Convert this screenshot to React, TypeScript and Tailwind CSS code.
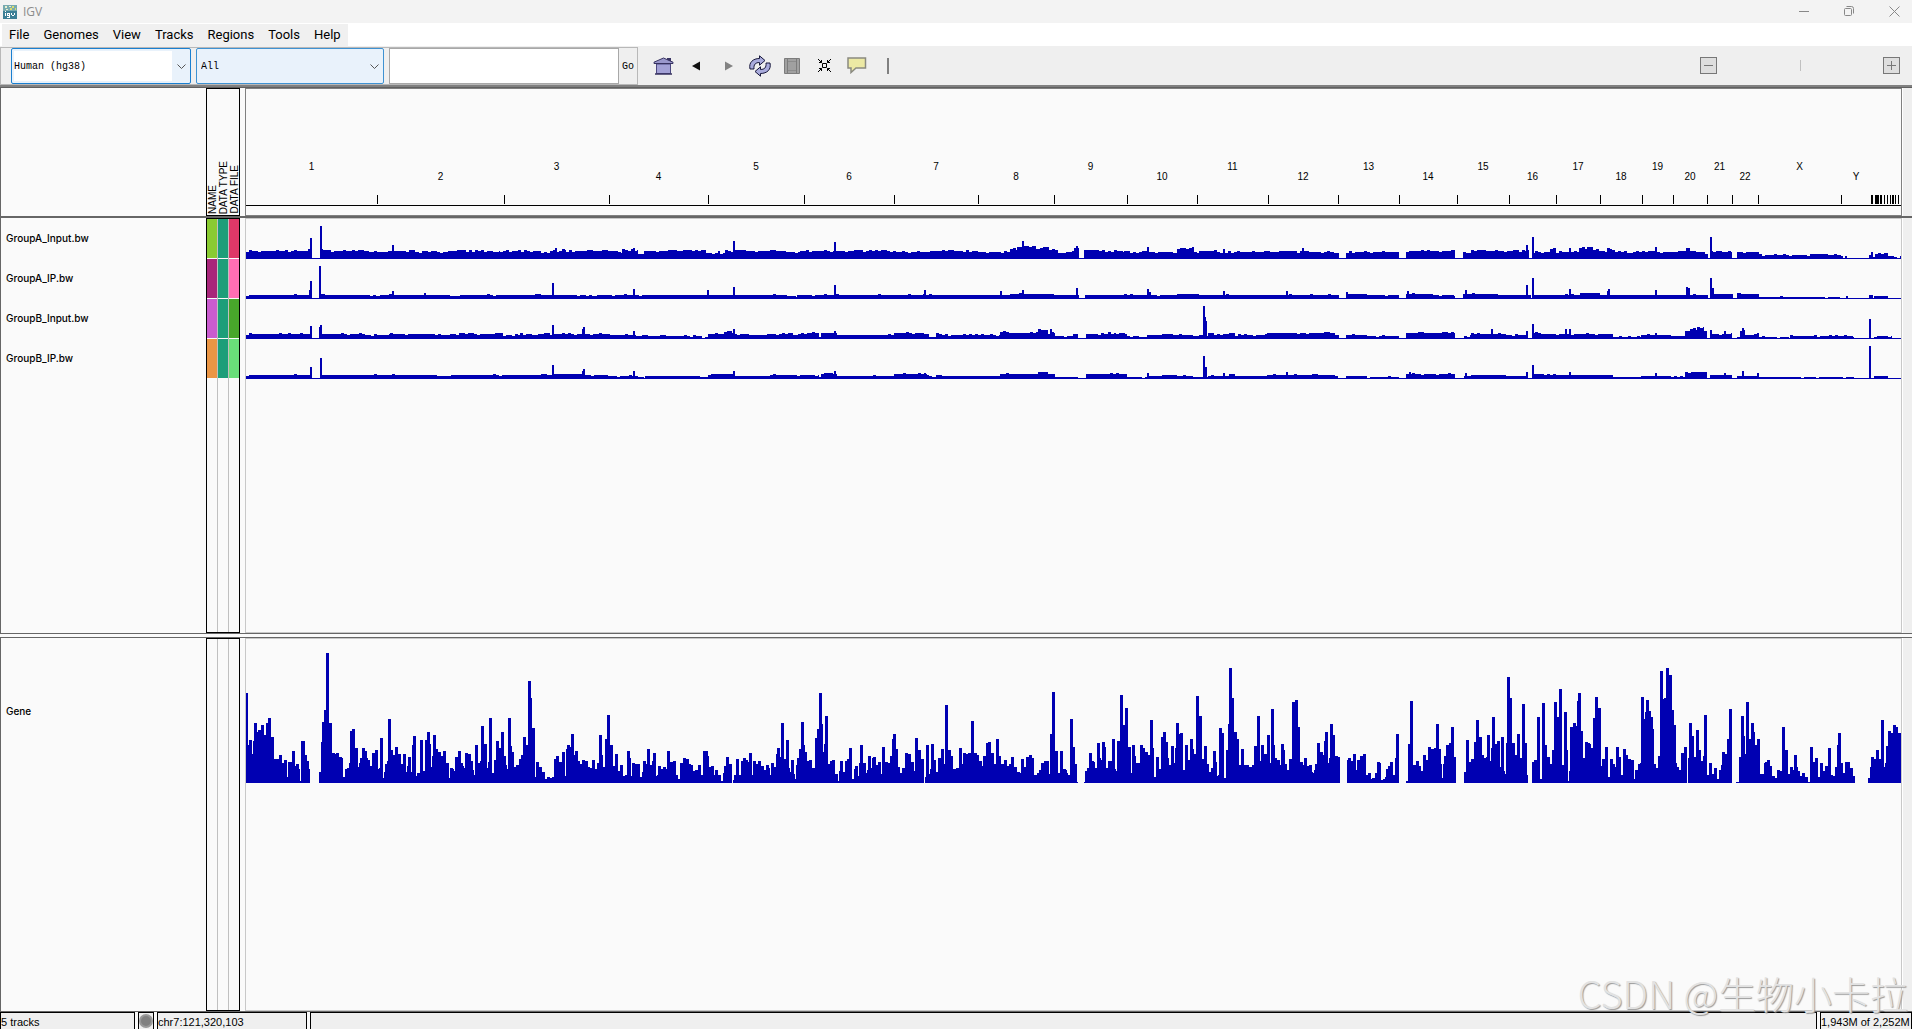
import React from "react";

const PLOT_LEFT = 246;
const PLOT_WIDTH = 1655;

type Run = { origin: number; scale: number; steps: string };

// Gene density: each run lists "x top" pairs, where top is measured from 0 down to 459.
const GENE_FLOOR = 459;
const GENE_RUNS: Run[] = [
  {
    origin: 235,
    scale: 2.8,
    steps:
      "31 189,36 345,39 330,48 372,51 333,53 279,62 306,65 300,73 285,81 315,87 279,92 264,101 321,109 387,123 375,132 399,137 390,146 441,148 396,160 363,168 408,171 402,179 417,182 453,185 333,196 375,202 393,207 417,210 459,235 426,241 336,244 276,249 240,255 69,263 279,272 369,280 372,283 369,291 381,300 384,302 441,308 417,314 414,319 399,322 303,328 297,336 354,344 411,347 399,350 384,356 354,364 363,370 384,372 390,378 408,384 369,392 360,400 417,403 414,406 324,414 444,417 426,420 402,426 393,428 267,437 360,442 375,448 351,456 372,465 402,470 372,479 426,482 408,484 381,493 426,496 345,498 318,507 438,510 429,518 330,526 423,532 330,538 306,546 342,549 411,552 378,554 315,563 357,568 366,577 378,582 363,591 399,599 444,602 414,610 417,613 423,616 381,624 363,633 399,638 408,641 414,644 369,652 372,661 393,666 420,669 435,672 345,680 399,686 393,689 288,697 342,706 414,708 396,711 264,720 429,725 390,731 333,739 354,745 306,753 378,759 405,762 417,764 264,773 348,776 366,781 411,787 405,795 387,801 375,806 321,815 345,820 153,829 204,832 294,840 441,843 396,851 411,860 426,868 447,874 441,882 444,888 441,893 387,899 378,907 396,916 366,924 438,927 357,930 345,938 351,941 312,949 375,952 363,960 393,966 402,972 390,980 393,988 411,994 414,1000 390,1008 417,1014 399,1019 315,1028 375,1030 411,1036 327,1042 255,1050 345,1058 408,1064 372,1072 423,1078 405,1086 438,1092 435,1098 363,1106 384,1109 438,1112 399,1120 402,1134 441,1140 426,1142 393,1151 402,1154 357,1162 405,1168 393,1170 369,1179 438,1182 435,1184 408,1193 417,1198 411,1207 417,1210 363,1218 396,1226 393,1235 435,1240 447,1246 399,1254 384,1262 387,1271 402,1276 405,1282 423,1288 420,1296 405,1305 435,1310 363,1324 378,1327 411,1333 408,1341 435,1344 420,1352 435,1361 453,1366 429,1369 408,1375 381,1383 402,1392 459,1394 450,1397 435,1403 387,1411 435,1417 393,1422 384,1431 390,1436 396,1439 369,1448 435,1450 393,1459 402,1464 393,1473 408,1481 420,1487 405,1495 414,1498 435,1501 399,1509 411,1515 372,1518 354,1526 381,1529 279,1537 387,1543 330,1551 414,1554 426,1557 390,1565 432",
  },
  {
    origin: 795,
    scale: 2.8,
    steps:
      "0 447,3 405,6 384,11 357,17 276,25 345,28 366,34 393,39 390,48 414,56 324,62 297,67 189,76 282,78 366,81 342,84 258,92 402,98 393,104 390,112 432,120 453,123 423,126 393,134 426,140 393,146 387,151 354,160 447,165 417,168 408,176 438,179 399,182 345,190 399,199 429,202 420,204 378,213 414,216 384,218 381,227 405,232 396,241 432,244 351,252 396,260 399,266 378,272 327,274 312,283 357,288 411,294 429,300 414,308 369,316 372,325 396,333 423,336 324,344 360,353 387,361 459,364 441,367 345,375 432,378 417,381 342,389 390,395 426,400 384,409 357,417 402,420 225,428 360,437 378,442 417,451 414,459 354,468 402,470 369,479 372,484 369,493 273,501 369,510 375,515 393,524 408,526 378,535 339,540 336,549 369,557 402,563 327,571 378,577 402,585 390,594 408,599 402,605 381,613 411,622 426,630 429,633 387,641 411,647 381,655 375,664 384,669 435,678 429,683 420,689 399,697 393,711 432,714 312,720 186,728 363,736 429,742 363,750 417,759 420,762 429,764 435,770 267,778 351,784 402,790 456,792 459,809 456,812 423,818 414,823 369,832 393,837 396,840 414,846 339,854 384,857 390,860 336,868 351,871 414,876 393,888 327,896 417,899 423,902 333,910 195,918 285,924 234,932 351,941 429,944 345,952 378,955 399,966 345,974 354,980 366,988 375,994 270,1002 354,1005 441,1011 381,1019 417,1025 321,1030 306,1039 336,1044 384,1047 405,1053 348,1061 399,1064 354,1067 279,1075 312,1078 309,1086 420,1092 345,1100 390,1106 327,1114 357,1117 372,1123 198,1131 258,1140 387,1145 348,1154 402,1159 426,1165 414,1170 363,1179 396,1182 438,1184 435,1187 294,1196 309,1201 444,1207 360,1212 282,1215 114,1224 204,1229 306,1238 327,1243 405,1249 357,1257 405,1271 411,1280 405,1285 348,1294 258,1302 393,1305 345,1313 372,1322 315,1330 399,1333 237,1341 345,1344 384,1350 390,1358 405,1361 342,1369 360,1372 402,1378 420,1383 387,1392 216,1400 210,1408 291,1414 396,1422 405,1425 384,1434 408,1439 405,1448 426,1450 429,1453 420,1456 402,1462 339,1470 366,1478 375,1481 333,1484 306,1492 399,1495 384,1498 282,1506 315,1512 378,1520 381,1526 459,1546 390,1548 384,1557 393",
  },
  {
    origin: 1352,
    scale: 2.8,
    steps:
      "0 393,3 372,11 420,14 390,22 378,31 372,39 435,45 429,53 447,56 444,64 429,70 396,78 399,81 450,87 447,92 441,95 417,101 408,106 396,115 435,120 384,123 312,132 459,151 453,157 342,162 213,171 405,179 393,188 408,193 423,199 375,207 390,213 351,221 357,230 354,235 282,244 357,249 402,252 444,255 402,258 378,263 345,272 339,277 291,286 381,291 459,314 426,319 330,328 396,333 387,342 336,347 270,356 321,364 375,370 384,375 381,378 315,386 393,389 354,392 261,400 342,406 333,414 411,417 321,426 423,428 432,431 339,434 141,442 204,448 339,456 375,462 312,470 384,476 222,484 339,490 435,493 459,504 396,510 390,518 261,526 447,532 219,540 345,546 381,554 402,560 360,566 216,574 261,580 177,588 405,594 246,602 360,605 453,608 423,610 291,619 279,627 288,630 213,633 189,641 303,647 384,652 336,661 339,666 342,669 354,675 264,680 201,689 234,697 408,700 387,708 351,717 441,722 387,731 402,736 411,739 351,748 381,753 435,759 357,767 375,773 387,781 390,790 447,792 420,801 402,806 399,809 201,818 267,820 246,823 210,832 243,837 261,843 297,846 402,851 414,857 378,862 123,871 207,874 204,879 114,888 135,896 240,902 285,907 399,910 411,916 420,921 369,930 351,938 459,941 384,944 279,952 318,958 381,963 300,972 360,977 393,983 378,986 255,994 435,1000 399,1008 432,1014 414,1022 447,1028 420,1033 405,1036 366,1044 372,1050 327,1056 237,1064 459,1075 456,1084 381,1089 258,1098 318,1100 372,1103 216,1112 327,1117 279,1126 306,1128 345,1134 327,1142 432,1154 399,1157 396,1162 390,1170 408,1176 438,1184 444,1190 420,1198 423,1204 291,1212 360,1221 432,1226 411,1235 420,1238 375,1246 411,1249 423,1254 438,1260 429,1268 441,1277 456,1282 351,1291 396,1296 384,1305 441,1310 399,1319 423,1324 408,1333 354,1341 435,1347 438,1352 411,1358 345,1361 309,1369 399,1375 429,1380 396,1394 414,1403 438,1408 459,1445 444,1450 411,1453 381,1462 387,1467 360,1475 387,1480 384,1481 270,1490 411,1492 399,1495 348,1501 303,1509 309,1515 285,1523 291,1529 309",
  },
];

function genePath(height: number): string {
  const pts: [number, number][] = [];
  GENE_RUNS.forEach((run) => {
    run.steps.split(",").forEach((pair) => {
      const [x, top] = pair.split(" ").map(Number);
      pts.push([
        Math.round(run.origin + x / run.scale) - PLOT_LEFT,
        height - (GENE_FLOOR - top) / 3,
      ]);
    });
  });
  let d = `M0 ${height}`;
  pts.forEach(([x, y]) => {
    d += `H${Math.max(0, x)}V${y}`;
  });
  return `${d}H${PLOT_WIDTH}V${height}Z`;
}

type Track = {
  name: string;
  colors: string[];
  // "x:height" plateaus and "x:height" peaks, in plot pixels
  levels: string;
  peaks: string;
  rough: number;
};

const TRACKS: Track[] = [
  {
    name: "GroupA_Input.bw",
    colors: ["bg-[#89cb32]", "bg-[#1d9e79]", "bg-[#de3868]"],
    rough: 0.5,
    levels:
      "246:8,308:10,312:1,320:9,325:8,369:6,374:7,382:8,416:7,440:7,448:8,500:7,506:8,541:6,550:8,562:9,566:8,618:7,622:9,634:8,638:5,644:8,706:6,718:7,720:5,725:8,770:8,786:7,795:6,800:8,890:7,930:8,980:7,1010:10,1017:12,1036:9,1040:12,1049:9,1058:6,1066:7,1074:11,1079:1,1084:8,1124:7,1155:7,1177:11,1194:6,1199:8,1217:6,1228:7,1334:6,1339:1,1346:7,1399:1,1406:8,1455:1,1463:6,1471:8,1529:1,1532:7,1550:10,1556:7,1579:11,1587:12,1593:10,1599:8,1607:10,1612:8,1615:7,1657:7,1686:10,1690:7,1705:5,1708:1,1710:7,1732:1,1737:7,1759:4,1841:2,1843:1,1845:2,1847:1,1869:3,1873:2,1875:5,1888:2",
    peaks:
      "310:21,320:33,392:14,555:11,633:11,733:18,834:17,1022:18,1076:13,1147:12,1223:10,1302:11,1526:14,1532:22,1569:11,1655:12,1710:22,1871:7",
  },
  {
    name: "GroupA_IP.bw",
    colors: ["bg-[#a8267a]", "bg-[#1d9e79]", "bg-[#ff6eb4]"],
    rough: 0.08,
    levels:
      "246:4,309:9,312:1,320:5,325:4,370:3,380:4,450:3,460:4,592:3,597:4,770:4,787:3,797:4,1010:5,1054:4,1079:1,1085:4,1177:5,1196:4,1339:1,1346:5,1367:4,1399:1,1406:5,1430:4,1455:1,1463:5,1498:4,1531:1,1532:4,1580:6,1600:4,1700:4,1708:1,1710:5,1733:1,1737:6,1741:5,1759:2,1841:1,1869:4,1873:1,1874:3,1888:1",
    peaks:
      "310:18,319:33,392:8,424:6,552:16,633:10,707:9,733:12,834:14,924:9,1000:8,1022:9,1076:11,1147:10,1149:7,1223:8,1286:8,1346:7,1407:8,1465:9,1526:14,1532:21,1569:10,1607:8,1608:10,1655:9,1686:12,1688:11,1710:21,1712:11,1846:3",
  },
  {
    name: "GroupB_Input.bw",
    colors: ["bg-[#ca5ccf]", "bg-[#1d9e79]", "bg-[#48a62b]"],
    rough: 0.3,
    levels:
      "246:5,312:1,320:5,365:4,390:5,435:4,450:5,503:4,520:5,584:5,610:4,636:3,702:2,708:5,715:6,719:5,724:7,732:5,737:4,770:5,793:4,798:5,809:6,819:2,821:6,837:4,894:6,924:5,929:2,936:5,942:4,1000:7,1009:6,1038:9,1048:6,1055:3,1073:5,1078:1,1086:5,1108:6,1116:5,1127:2,1147:4,1162:5,1173:4,1193:3,1208:5,1229:6,1235:4,1267:6,1335:4,1339:1,1346:4,1367:3,1399:1,1406:6,1455:1,1464:3,1471:5,1506:4,1528:1,1532:6,1544:5,1613:2,1641:4,1671:3,1685:8,1690:10,1697:11,1704:9,1707:1,1710:5,1732:1,1737:3,1740:8,1745:4,1759:2,1790:3,1854:1,1874:3,1888:2,1892:1",
    peaks:
      "310:13,319:12,320:14,552:14,582:10,583:12,633:8,733:10,834:8,1050:10,1203:33,1204:22,1205:18,1491:10,1526:8,1532:15,1565:10,1569:10,1655:6,1698:12,1710:9,1724:8,1742:11,1757:6,1869:20",
  },
  {
    name: "GroupB_IP.bw",
    colors: ["bg-[#eb9645]", "bg-[#1d9e79]", "bg-[#69de79]"],
    rough: 0.1,
    levels:
      "246:4,312:1,320:4,437:3,451:4,552:5,585:4,608:3,638:2,645:3,700:2,708:4,711:5,735:3,770:4,819:2,821:5,837:3,894:5,924:4,929:2,936:4,942:3,1000:5,1038:7,1048:5,1055:2,1078:1,1086:5,1127:2,1147:3,1162:4,1177:3,1193:2,1208:3,1229:5,1235:3,1267:4,1335:3,1338:1,1346:3,1367:2,1399:1,1406:5,1455:1,1464:3,1471:4,1506:3,1528:1,1532:5,1544:4,1613:2,1641:3,1671:2,1685:7,1707:1,1710:4,1732:1,1737:3,1759:2,1854:1,1874:3,1888:1",
    peaks:
      "310:12,320:21,552:14,582:8,583:10,633:8,733:8,834:8,924:6,1147:6,1203:23,1205:12,1223:6,1286:7,1409:7,1465:6,1526:7,1532:14,1569:7,1655:6,1724:6,1742:8,1757:6,1869:33",
  },
];

const parsePairs = (s: string) => s.split(",").map((p) => p.split(":").map(Number));

function trackPath(track: Track, height: number): string {
  const levels = parsePairs(track.levels);
  let seed = 7;
  const rand = () => {
    seed = (seed * 16807) % 2147483647;
    return seed / 2147483647;
  };
  let d = "";
  levels.forEach(([start, level], i) => {
    const end = i + 1 < levels.length ? levels[i + 1][0] : PLOT_LEFT + PLOT_WIDTH;
    for (let x = start; x < end; x += 3) {
      const w = Math.min(3, end - x);
      const bump = level > 1 && rand() < track.rough ? (rand() < 0.7 ? 1 : -1) : 0;
      const h = level + bump;
      d += `M${x - PLOT_LEFT} ${height}v${-h}h${w}v${h}z`;
    }
  });
  parsePairs(track.peaks).forEach(([x, h]) => {
    d += `M${x - PLOT_LEFT} ${height}v${-h}h2v${h}z`;
  });
  return d;
}

const CHROMOSOMES: [string, number][] = [
  ["1", 131], ["2", 127], ["3", 105], ["4", 99], ["5", 96], ["6", 90], ["7", 84],
  ["8", 76], ["9", 73], ["10", 70], ["11", 71], ["12", 70], ["13", 61], ["14", 58],
  ["15", 52], ["16", 47], ["17", 44], ["18", 42], ["19", 31], ["20", 34], ["21", 25],
  ["22", 26], ["X", 83], ["Y", 30],
];

function Plot({ d, height, className }: { d: string; height: number; className: string }) {
  return (
    <svg
      className={`block w-full fill-[#0000b2] ${className}`}
      viewBox={`0 0 ${PLOT_WIDTH} ${height}`}
      preserveAspectRatio="none"
      shapeRendering="crispEdges"
      aria-hidden="true"
    >
      <path d={d} />
    </svg>
  );
}

function Attributes({ children }: { children?: React.ReactNode }) {
  return (
    <div className="grid w-[34px] shrink-0 grid-cols-[11px_11px_10px] border border-black">
      {[0, 1, 2].map((col) => (
        <div key={col} className={col < 2 ? "border-r border-[#c0c0c0]" : ""}>
          {React.Children.toArray(children)[col]}
        </div>
      ))}
    </div>
  );
}

function AppIcon() {
  return (
    <svg className="size-3.5" viewBox="0 0 14 14" shapeRendering="crispEdges" aria-hidden="true">
      <rect width="14" height="14" rx="1" fill="#3c7f96" />
      <rect width="14" height="6" fill="#78aab0" />
      <path d="M2 1h2v2H2zM6 1h2v1H6zM3 4h2v1H3z" fill="#e8f0d0" />
      <path d="M9 1h2v2H9zM12 3h1v2h-1zM7 3h2v2H7z" fill="#d8dc70" />
      <path d="M2 6h1v1H2zM2 8h1v3H2zM4 8h3v5H4v-1h2v-1H4zM5 9v1h1V9zM8 8h1v2h1v1H9v-1H8zM11 8h1v2h-1v1h-1v-1h1z" fill="#fff" />
    </svg>
  );
}

function HomeIcon() {
  return (
    <svg width="21" height="18" viewBox="0 0 21 18" aria-hidden="true">
      <path d="M14 1h4v5h-4z" fill="#3a3566" />
      <path d="M3.500 7h14v9.500h-14z" fill="#a3a1d6" stroke="#4b4880" />
      <path d="M10.500 1L1 5.200v1.300h19V5.200z" fill="#9a98cc" stroke="#37325f" />
      <path d="M2 17h17" stroke="#37325f" strokeWidth="1.500" />
    </svg>
  );
}

function RefreshIcon() {
  return (
    <svg width="22" height="22" viewBox="0 0 22 22" fill="#a9abdc" stroke="#17173a" aria-hidden="true">
      <path d="M1 14C-.5 7.500 4 3.500 10.500 3.500V.8L16 5.500l-5.500 4.700V7.500C6.500 7.500 4.500 9.500 5 14z" />
      <path d="M21 8c1.500 6.500-3 10.500-9.500 10.500v2.700L6 16.500l5.500-4.700v2.700c4 0 6-2 5.500-6.500z" />
    </svg>
  );
}

function RegionIcon() {
  return (
    <svg width="16" height="16" viewBox="0 0 16 16" aria-hidden="true">
      <path d="M.5.5h15v15H.5z" fill="#a0a0a0" stroke="#7c7c7c" />
      <path d="M3.500 1v14M12.500 1v14" stroke="#7c7c7c" />
      <path d="M4 3.500h8M4 12.500h8" stroke="#8c8c8c" />
    </svg>
  );
}

function FitIcon() {
  return (
    <svg width="13" height="13" viewBox="0 0 13 13" stroke="#000" fill="none" aria-hidden="true">
      <path d="M4.500 4.500h4v4h-4zM0 0l3.500 3.500M13 0L9.500 3.500M0 13l3.500-3.500M13 13L9.500 9.500M1 3.500h2.500V1M12 3.500H9.500V1M1 9.500h2.500V12M12 9.500H9.500V12" />
    </svg>
  );
}

function BalloonIcon() {
  return (
    <svg width="20" height="17" viewBox="0 0 20 17" aria-hidden="true">
      <path d="M1 1h17.500v10H9l-5 4.500V11H1z" fill="#ece9a4" stroke="#8a8a80" strokeWidth="1.500" />
    </svg>
  );
}

function ToolButton({ label, className, children }: { label: string; className: string; children: React.ReactNode }) {
  return (
    <button type="button" aria-label={label} className={`flex h-6 items-center justify-center ${className}`}>
      {children}
    </button>
  );
}

function Chevron() {
  return (
    <svg className="pointer-events-none absolute top-1/2 right-1 -mt-0.5" width="9" height="6" viewBox="0 0 9 6" fill="none" stroke="#555" aria-hidden="true">
      <path d="M.5.5l4 4 4-4" />
    </svg>
  );
}

const MENUS = ["File", "Genomes", "View", "Tracks", "Regions", "Tools", "Help"];
const PARTS = ["NAME", "DATA TYPE", "DATA FILE"];

export default function App() {
  return (
    <div className="relative flex h-screen flex-col overflow-hidden bg-[#fafafa] font-['Liberation_Sans',sans-serif] text-black">
      <header className="flex h-[23px] shrink-0 items-center bg-[#f3f3f3] pl-[3px]">
        <AppIcon />
        <h1 className="ml-1.5 font-['Open_Sans',sans-serif] text-[12px] text-[#8c8c8c]">IGV</h1>
        <div className="ml-auto flex items-center text-[#888]">
          <button type="button" aria-label="Minimize" className="flex w-[45px] justify-center">
            <svg width="11" height="11" viewBox="0 0 11 11" stroke="currentColor"><path d="M0 5.500h10" /></svg>
          </button>
          <button type="button" aria-label="Restore" className="flex w-[45px] justify-center">
            <svg width="11" height="11" viewBox="0 0 11 11" stroke="currentColor" fill="none">
              <rect x=".5" y="2.500" width="7" height="7" rx="1" />
              <path d="M2.500.5h5a2 2 0 0 1 2 2v5" />
            </svg>
          </button>
          <button type="button" aria-label="Close" className="flex w-10 justify-center pl-1">
            <svg width="11" height="11" viewBox="0 0 11 11" stroke="currentColor"><path d="M.5.5l10 10M10.500.5l-10 10" /></svg>
          </button>
        </div>
      </header>

      <nav className="flex h-[23px] shrink-0 bg-white pt-px pl-0.5">
        <div className="flex items-center bg-[#f0f0f0] font-['Roboto',sans-serif] text-[13px]">
          {MENUS.map((m) => (
            <button key={m} type="button" className="px-[7px]">
              {m}
            </button>
          ))}
        </div>
      </nav>

      <div className="flex h-[39px] shrink-0 items-center bg-[#efefef]">
        <form className="flex h-[38px] items-center border border-[#b8b8b8] pl-2.5" onSubmit={(e) => e.preventDefault()}>
          <div className="relative mr-[5px] h-9 w-[180px] rounded-xs border border-[#1a7fd0] bg-[#e9f2fb] p-0.5">
            <select aria-label="Genome" className="h-full w-[158px] appearance-none bg-white pt-0.5 font-['Liberation_Mono',monospace] text-[10px]">
              <option>Human (hg38)</option>
            </select>
            <Chevron />
          </div>
          <div className="relative mr-[5px] h-9 w-[188px] rounded-xs border border-[#3f92d2] bg-[#e9f2fb]">
            <select aria-label="Chromosome" className="h-full w-full appearance-none pt-0.5 pl-1 font-['Liberation_Mono',monospace] text-[10px]">
              <option>All</option>
            </select>
            <Chevron />
          </div>
          <input aria-label="Locus" type="text" className="h-9 w-[230px] border border-[#a8a8a8] bg-white px-1 text-[11px]" />
          <button type="submit" className="h-9 w-[18px] pt-0.5 font-['Liberation_Mono',monospace] text-[10px]">
            Go
          </button>
        </form>

        <div className="ml-[13px] flex items-center">
          <ToolButton label="Home" className="w-6"><HomeIcon /></ToolButton>
          <ToolButton label="Back" className="ml-[9px] w-6">
            <svg width="9" height="10" viewBox="0 0 9 10"><path d="M0 5l8-4.500v9z" fill="#111" /></svg>
          </ToolButton>
          <ToolButton label="Forward" className="ml-2 w-6">
            <svg width="9" height="10" viewBox="0 0 9 10"><path d="M9 5L1 .5v9z" fill="#828282" /></svg>
          </ToolButton>
          <ToolButton label="Refresh" className="ml-2 w-6"><RefreshIcon /></ToolButton>
          <ToolButton label="Define region" className="ml-2 w-6"><RegionIcon /></ToolButton>
          <ToolButton label="Fit to window" className="ml-2 w-6"><FitIcon /></ToolButton>
          <ToolButton label="Popup behaviour" className="ml-[9px] w-6"><BalloonIcon /></ToolButton>
          <div className="ml-[18px] h-4 w-0.5 bg-[#808080]" />
        </div>

        <div className="mr-3 ml-auto flex items-center">
          <button type="button" aria-label="Zoom out" className="flex size-[17px] items-center justify-center border border-[#777] bg-[#dedede]">
            <svg width="9" height="9" viewBox="0 0 9 9" stroke="#777"><path d="M0 4.500h9" /></svg>
          </button>
          <div className="flex w-[166px] justify-center">
            <div className="h-[11px] w-px bg-[#c0c0c0]" />
          </div>
          <button type="button" aria-label="Zoom in" className="flex size-[17px] items-center justify-center border border-[#777] bg-[#dedede]">
            <svg width="9" height="9" viewBox="0 0 9 9" stroke="#777"><path d="M0 4.500h9M4.500 0v9" /></svg>
          </button>
        </div>
      </div>
      <div className="h-[3px] shrink-0 border-b border-[#606060] bg-[#808080]" />

      <section className="flex h-32 shrink-0">
        <div className="w-[206px] shrink-0 border-l border-[#666]" />
        <div className="flex w-[34px] shrink-0 items-end border border-black pb-px">
          {PARTS.map((p) => (
            <div key={p} className="w-[11px] rotate-180 whitespace-nowrap text-[10px] leading-[11px] [writing-mode:vertical-rl]">
              {p}
            </div>
          ))}
        </div>
        <div className="ml-[5px] flex flex-1 flex-col border border-[#808080]">
          <div className="mt-auto flex h-[43px] pb-px text-[10px] leading-[10px]">
            {CHROMOSOMES.map(([name, size], i) => (
              <div key={name} className="flex min-w-0 basis-0 flex-col" style={{ flexGrow: size }}>
                <div className={i % 2 ? "pt-2.5 text-center" : "text-center"}>{name}</div>
                {i < 23 && <div className="-mr-px mt-auto h-[9px] self-end border-r border-black" />}
              </div>
            ))}
            <div className="flex basis-0 items-end" style={{ flexGrow: 30 }}>
              <svg className="h-[9px] w-full" viewBox="0 0 30 9" preserveAspectRatio="none" shapeRendering="crispEdges" aria-hidden="true">
                <path d="M0 0h2v9H0zM4 0h4v9H4zM9 0h2v9H9zM13 0h1v9h-1zM16 0h1v9h-1zM19 0h1v9h-1zM21 0h2v9h-2zM24 0h1v9h-1zM27 0h1v9h-1z" />
              </svg>
            </div>
          </div>
          <div className="mb-[9px] h-px bg-black" />
        </div>
        <div className="w-2.5 shrink-0 border-l border-white bg-[#efefef]" />
      </section>
      <div className="h-0.5 shrink-0 bg-[#666]" />

      <section className="flex min-h-0 grow-[415] basis-0">
        <div className="w-[206px] shrink-0 border-l border-[#666]">
          {TRACKS.map((t) => (
            <div key={t.name} className="flex h-10 items-center pl-[5px] font-['Inter',sans-serif] text-[10px] font-medium">
              {t.name}
            </div>
          ))}
        </div>
        <Attributes>
          {[0, 1, 2].map((col) => (
            <div key={col}>
              {TRACKS.map((t) => (
                <div key={t.name} className={`mb-px h-[39px] ${t.colors[col]}`} />
              ))}
            </div>
          ))}
        </Attributes>
        <div className="ml-[5px] flex-1 border border-[#c8c8c8]">
          {TRACKS.map((t) => (
            <Plot key={t.name} d={trackPath(t, 40)} height={40} className="h-10" />
          ))}
        </div>
        <div className="w-2.5 shrink-0 border-l border-white bg-[#efefef]" />
      </section>
      <div className="h-[5px] shrink-0 border-y border-[#666] bg-[#fafafa]" />

      <section className="flex min-h-0 grow-[373] basis-0">
        <div className="w-[206px] shrink-0 border-l border-[#666] pt-px">
          <div className="flex h-36 items-center pl-[5px] font-['Inter',sans-serif] text-[10px] font-medium">Gene</div>
        </div>
        <Attributes />
        <div className="ml-[5px] flex-1 border border-[#c8c8c8]">
          <Plot d={genePath(144)} height={144} className="h-36" />
        </div>
        <div className="w-2.5 shrink-0 border-l border-white bg-[#efefef]" />
      </section>

      <footer className="flex h-[18px] shrink-0 gap-[3px] border-t border-[#666] bg-[#fafafa] text-[11px] leading-[18px] *:border-x *:border-t *:border-black *:bg-[#efefef]">
        <div className="w-[135px]">5 tracks</div>
        <div className="flex w-4 items-center justify-center">
          <span className="size-3.5 shrink-0 rounded-full border-2 border-[#999] bg-[#808080]" />
        </div>
        <div className="w-[150px]">chr7:121,320,103</div>
        <div className="flex-1" />
        <div className="w-[92px] whitespace-nowrap">1,943M of 2,252M</div>
      </footer>

      <div className="pointer-events-none absolute right-1 bottom-3 font-['Noto_Sans_CJK_SC',sans-serif] text-[38px] leading-[48px] font-light whitespace-nowrap text-[#e2e2e2] [text-shadow:1px_1px_1px_#999]">
        CSDN @生物小卡拉
      </div>
    </div>
  );
}
